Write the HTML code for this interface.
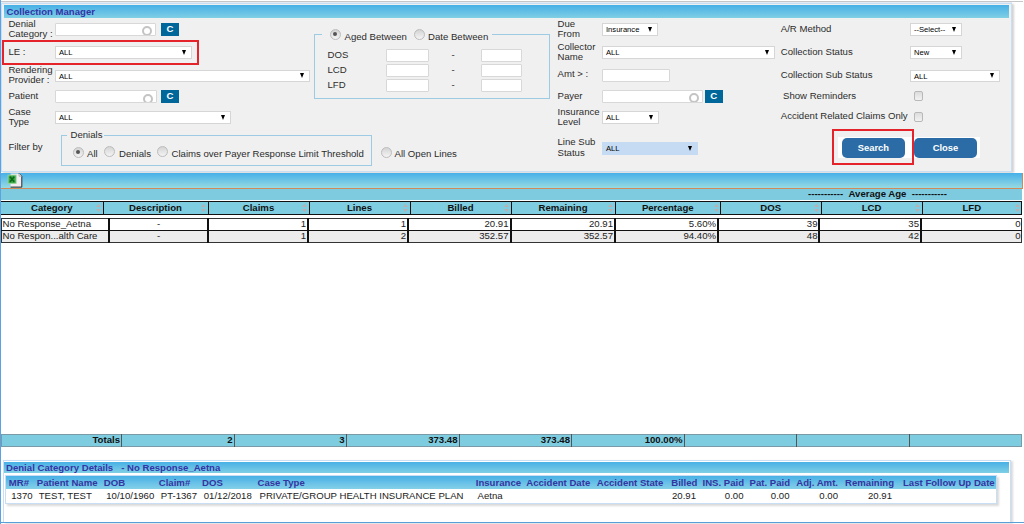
<!DOCTYPE html>
<html><head><meta charset="utf-8">
<style>
*{box-sizing:border-box;margin:0;padding:0}
html,body{width:1024px;height:524px;overflow:hidden;background:#fff}
body{position:relative;font-family:"Liberation Sans",sans-serif;font-size:9.6px;color:#333}
.a{position:absolute}
.t{position:absolute;white-space:nowrap;line-height:10.5px;font-size:9.6px;color:#2c2c2c}
.inp{position:absolute;background:#fff;border:1px solid #d8d8d8;border-radius:1px}
.sel{position:absolute;background:#fff;border:1px solid #d6d6d6;font-size:7.6px;color:#000;line-height:11px;padding-left:3px;white-space:nowrap}
.sel i{position:absolute;right:5px;top:2.8px;width:0;height:0;border-left:2.8px solid transparent;border-right:2.8px solid transparent;border-top:5.2px solid #000}
.cbtn{position:absolute;background:#00679b;color:#fff;font-weight:bold;font-size:9.6px;text-align:center;line-height:12.5px}
.srch{position:absolute;width:10px;height:10px;border:2px solid #c4c4c4;border-radius:50%}
.rad{position:absolute;width:11px;height:11px;border-radius:50%;border:1px solid #bcbcbc;background:linear-gradient(#d4d4d4,#f4f4f4)}
.rad.on::after{content:"";position:absolute;left:2.4px;top:2.4px;width:4px;height:4px;border-radius:50%;background:#555}
.chk{position:absolute;width:9.5px;height:9.5px;border:1px solid #b8b8b8;border-radius:2px;background:linear-gradient(#dcdcdc,#f2f2f2)}
.btn{position:absolute;background:#2b6ca6;border-radius:5px;color:#fff;font-weight:bold;font-size:9.4px;text-align:center;line-height:19.5px}
.hc{position:absolute;top:201px;height:14px;border:1px solid #111;border-left:none;background:#7ecde0;font-weight:bold;color:#111;text-align:center;line-height:12px}
.dc{position:absolute;height:13px;border-right:2px solid #111;text-align:right;color:#222;line-height:11.5px;padding-right:1px;white-space:nowrap;overflow:hidden}
.tc{position:absolute;top:433.5px;height:13px;border-right:1px solid #555;text-align:right;font-weight:bold;color:#111;line-height:12px;padding-right:1px}
.dh{position:absolute;top:478px;font-weight:bold;color:#3535a0;white-space:nowrap;line-height:10.5px}
.dv{position:absolute;top:490.5px;color:#222;white-space:nowrap;line-height:10.5px}
</style></head><body>
<!-- page frame lines -->
<div class="a" style="left:0;top:1px;width:1023px;height:1px;background:#c6c6c6"></div>

<!-- Collection manager panel -->
<div class="a" style="left:1px;top:2px;width:1011px;height:1px;background:#e6edf6"></div>
<div class="a" style="left:1px;top:3px;width:1011px;height:169px;background:#f0f0f0;border:1px solid #c8def4;box-shadow:2px 1px 2px rgba(0,0,0,.18)"></div>
<div class="a" style="left:4px;top:5px;width:1005px;height:12.5px;background:linear-gradient(#47b0e6,#80cfe4)"></div>
<div class="t" style="left:6.5px;top:6px;font-weight:bold;color:#3434a6;line-height:12px">Collection Manager</div>

<!-- left column -->
<div class="t" style="left:8.4px;top:18.5px">Denial<br>Category :</div>
<div class="inp" style="left:55px;top:23px;width:101px;height:12.5px;overflow:hidden"><div class="srch" style="left:86px;top:2px"></div></div>
<div class="cbtn" style="left:161px;top:23px;width:18px;height:12.5px">C</div>

<div class="a" style="left:2px;top:40px;width:197px;height:24.5px;border:2px solid #e5232b"></div>
<div class="t" style="left:8.4px;top:47px">LE :</div>
<div class="sel" style="left:55px;top:46px;width:136.5px;height:13px">ALL<i></i></div>

<div class="t" style="left:8.4px;top:64.5px">Rendering<br>Provider :</div>
<div class="sel" style="left:55px;top:69.5px;width:254.5px;height:12.5px">ALL<i></i></div>

<div class="t" style="left:8.4px;top:91px">Patient</div>
<div class="inp" style="left:55px;top:90px;width:101.5px;height:12.5px;overflow:hidden"><div class="srch" style="left:87px;top:2.5px"></div></div>
<div class="cbtn" style="left:161px;top:90px;width:18px;height:13px">C</div>

<div class="t" style="left:8.4px;top:106.5px">Case<br>Type</div>
<div class="sel" style="left:55px;top:111px;width:175.5px;height:12.5px">ALL<i></i></div>

<div class="t" style="left:8.4px;top:142px">Filter by</div>
<!-- denials fieldset -->
<div class="a" style="left:61px;top:135px;width:310.5px;height:31px;border:1px solid #9ccbe3"></div>
<div class="a" style="left:67px;top:130px;width:37px;height:8px;background:#f0f0f0"></div>
<div class="t" style="left:70.5px;top:129.5px">Denials</div>
<div class="rad on" style="left:72.5px;top:146.5px"></div>
<div class="t" style="left:87px;top:149.3px">All</div>
<div class="rad" style="left:104px;top:146px"></div>
<div class="t" style="left:119px;top:149.3px">Denials</div>
<div class="rad" style="left:157px;top:146px"></div>
<div class="t" style="left:171.5px;top:149.3px">Claims over Payer Response Limit Threshold</div>
<div class="rad" style="left:380.5px;top:146.5px"></div>
<div class="t" style="left:394.5px;top:149.3px">All Open Lines</div>

<!-- aged fieldset -->
<div class="a" style="left:314px;top:34px;width:235.5px;height:64.5px;border:1px solid #9ccbe3"></div>
<div class="a" style="left:322px;top:28px;width:170px;height:10px;background:#f0f0f0"></div>
<div class="rad on" style="left:329.5px;top:29px;width:11px;height:11px"></div>
<div class="t" style="left:344.5px;top:32px">Aged Between</div>
<div class="rad" style="left:413.5px;top:28.5px;width:11px;height:11px"></div>
<div class="t" style="left:428px;top:32px">Date Between</div>
<div class="t" style="left:327.5px;top:49.5px">DOS</div>
<div class="t" style="left:327.5px;top:64.5px">LCD</div>
<div class="t" style="left:327.5px;top:79.5px">LFD</div>
<div class="inp" style="left:386px;top:49px;width:42.75px;height:12.5px"></div>
<div class="inp" style="left:386px;top:64px;width:42.75px;height:12.5px"></div>
<div class="inp" style="left:386px;top:79px;width:42.75px;height:12.5px"></div>
<div class="t" style="left:451.5px;top:50px">-</div>
<div class="t" style="left:451.5px;top:65px">-</div>
<div class="t" style="left:451.5px;top:80px">-</div>
<div class="inp" style="left:480.5px;top:49px;width:41.5px;height:12.5px"></div>
<div class="inp" style="left:480.5px;top:64px;width:41.5px;height:12.5px"></div>
<div class="inp" style="left:480.5px;top:79px;width:41.5px;height:12.5px"></div>

<!-- middle right column -->
<div class="t" style="left:557.5px;top:18.5px">Due<br>From</div>
<div class="sel" style="left:602px;top:23px;width:55.5px;height:12.5px">Insurance<i></i></div>
<div class="t" style="left:557.5px;top:41.5px">Collector<br>Name</div>
<div class="sel" style="left:602px;top:46px;width:172.5px;height:13px">ALL<i></i></div>
<div class="t" style="left:557.5px;top:69px">Amt &gt; :</div>
<div class="inp" style="left:602px;top:69px;width:67.5px;height:12.5px"></div>
<div class="t" style="left:557.5px;top:90.5px">Payer</div>
<div class="inp" style="left:602px;top:90px;width:100.5px;height:12.5px;overflow:hidden"><div class="srch" style="left:85.5px;top:2px"></div></div>
<div class="cbtn" style="left:705px;top:90px;width:17.5px;height:13px">C</div>
<div class="t" style="left:557.5px;top:106.5px">Insurance<br>Level</div>
<div class="sel" style="left:602px;top:111px;width:56.75px;height:12.5px">ALL<i></i></div>
<div class="t" style="left:557.5px;top:137px">Line Sub<br>Status</div>
<div class="sel" style="left:602px;top:142px;width:95.5px;height:12.5px;background:#c5daf3;border-color:#c5daf3">ALL<i></i></div>

<!-- right column -->
<div class="t" style="left:780.75px;top:23.5px">A/R Method</div>
<div class="sel" style="left:910px;top:23px;width:52px;height:12.5px">--Select--<i></i></div>
<div class="t" style="left:780.75px;top:46.5px">Collection Status</div>
<div class="sel" style="left:910px;top:46px;width:52px;height:13px">New<i></i></div>
<div class="t" style="left:780.75px;top:69.5px">Collection Sub Status</div>
<div class="sel" style="left:910px;top:69.5px;width:89.5px;height:12.5px">ALL<i></i></div>
<div class="t" style="left:783px;top:90.5px">Show Reminders</div>
<div class="chk" style="left:913.5px;top:91px"></div>
<div class="t" style="left:780.75px;top:111px">Accident Related Claims Only</div>
<div class="chk" style="left:913.5px;top:112px"></div>

<!-- buttons -->
<div class="a" style="left:838px;top:137px;width:142px;height:21px;background:#fff"></div>
<div class="btn" style="left:841.75px;top:138px;width:63.25px;height:19.5px">Search</div>
<div class="btn" style="left:914.25px;top:138px;width:62.5px;height:19.5px">Close</div>
<div class="a" style="left:832px;top:129px;width:81.5px;height:35.5px;border:2px solid #e5232b"></div>

<!-- excel bar -->
<div class="a" style="left:1px;top:173px;width:1022px;height:16px;background:linear-gradient(#46b0e8,#96dae2);border-right:1px solid #d08a5a;border-bottom:1px solid #d08a5a"></div>
<svg class="a" style="left:7px;top:171.5px" width="16" height="16" viewBox="0 0 16 16">
<path d="M3.6 1.4h8.4l2.8 2.8v10.9h-11.2z" fill="#f3ecf3"/>
<path d="M12 1.4l2.8 2.8v10.9h-11.2" fill="none" stroke="#2a2a2a" stroke-width="1"/>
<path d="M12 1.4v2.8h2.8" fill="#ddd" stroke="#888" stroke-width="0.5"/>
<rect x="1.1" y="3.1" width="8" height="8.4" fill="#3fa84a" stroke="#9ad49c" stroke-width="0.9"/>
<path d="M3 4.8l4.2 5M7.2 4.8l-4.2 5" stroke="#0a6a18" stroke-width="1.7"/>
</svg>
<div class="a" style="left:1px;top:189px;width:1021px;height:11.5px;background:#7ecbe0"></div>
<div class="t" style="left:808px;top:188.5px;font-weight:bold;color:#111">----------- &nbsp;Average Age &nbsp;-----------</div>

<!-- header table -->
<div class="a" style="left:1px;top:200px;width:1021px;height:1px;background:#fff"></div>
<div class="a" style="left:1px;top:201px;width:1px;height:14px;background:#111"></div>
<div class="hc" style="left:1px;width:102.5px">Category<svg style="position:absolute;right:1.5px;top:2px" width="5" height="9" viewBox="0 0 5 9"><path d="M2.5 0L5 3H0z M0 5h5L2.5 8z" fill="#bab0b0"/></svg></div>
<div class="hc" style="left:103.5px;width:105px">Description<svg style="position:absolute;right:1.5px;top:2px" width="5" height="9" viewBox="0 0 5 9"><path d="M2.5 0L5 3H0z M0 5h5L2.5 8z" fill="#bab0b0"/></svg></div>
<div class="hc" style="left:208.5px;width:101px">Claims<svg style="position:absolute;right:1.5px;top:2px" width="5" height="9" viewBox="0 0 5 9"><path d="M2.5 0L5 3H0z M0 5h5L2.5 8z" fill="#bab0b0"/></svg></div>
<div class="hc" style="left:309.5px;width:101px">Lines<svg style="position:absolute;right:1.5px;top:2px" width="5" height="9" viewBox="0 0 5 9"><path d="M2.5 0L5 3H0z M0 5h5L2.5 8z" fill="#bab0b0"/></svg></div>
<div class="hc" style="left:410.5px;width:101px">Billed<svg style="position:absolute;right:1.5px;top:2px" width="5" height="9" viewBox="0 0 5 9"><path d="M2.5 0L5 3H0z M0 5h5L2.5 8z" fill="#bab0b0"/></svg></div>
<div class="hc" style="left:511.5px;width:104px">Remaining<svg style="position:absolute;right:1.5px;top:2px" width="5" height="9" viewBox="0 0 5 9"><path d="M2.5 0L5 3H0z M0 5h5L2.5 8z" fill="#bab0b0"/></svg></div>
<div class="hc" style="left:615.5px;width:105.5px">Percentage<svg style="position:absolute;right:1.5px;top:2px" width="5" height="9" viewBox="0 0 5 9"><path d="M2.5 0L5 3H0z M0 5h5L2.5 8z" fill="#bab0b0"/></svg></div>
<div class="hc" style="left:721px;width:100.5px">DOS<svg style="position:absolute;right:1.5px;top:2px" width="5" height="9" viewBox="0 0 5 9"><path d="M2.5 0L5 3H0z M0 5h5L2.5 8z" fill="#bab0b0"/></svg></div>
<div class="hc" style="left:821.5px;width:101px">LCD<svg style="position:absolute;right:1.5px;top:2px" width="5" height="9" viewBox="0 0 5 9"><path d="M2.5 0L5 3H0z M0 5h5L2.5 8z" fill="#bab0b0"/></svg></div>
<div class="hc" style="left:922.5px;width:99.5px">LFD<svg style="position:absolute;right:1.5px;top:2px" width="5" height="9" viewBox="0 0 5 9"><path d="M2.5 0L5 3H0z M0 5h5L2.5 8z" fill="#bab0b0"/></svg></div>

<!-- data table -->
<div class="a" style="left:1px;top:218px;width:1021px;height:25px;border:1px solid #333;background:#fff"></div>
<div class="a" style="left:2px;top:231px;width:1019px;height:11px;background:#ececec"></div>
<div class="a" style="left:1px;top:230px;width:1021px;height:1px;background:#111"></div>
<div class="a" style="left:108px;top:218px;width:2px;height:25px;background:#111"></div>
<div class="a" style="left:207px;top:218px;width:2px;height:25px;background:#111"></div>
<div class="a" style="left:307px;top:218px;width:2px;height:25px;background:#111"></div>
<div class="a" style="left:407px;top:218px;width:2px;height:25px;background:#111"></div>
<div class="a" style="left:509.5px;top:218px;width:2px;height:25px;background:#111"></div>
<div class="a" style="left:613.5px;top:218px;width:2px;height:25px;background:#111"></div>
<div class="a" style="left:716.5px;top:218px;width:2px;height:25px;background:#111"></div>
<div class="a" style="left:818px;top:218px;width:2px;height:25px;background:#111"></div>
<div class="a" style="left:919.5px;top:218px;width:2px;height:25px;background:#111"></div>

<div class="t" style="left:2.5px;top:218.5px;color:#222">No Response_Aetna</div>
<div class="t" style="left:2.5px;top:231px;color:#222">No Respon...alth Care</div>
<div class="t" style="left:157px;top:218.5px;color:#222">-</div>
<div class="t" style="left:157px;top:231px;color:#222">-</div>
<div class="t" style="left:207px;top:218.5px;width:99px;text-align:right;color:#222">1</div>
<div class="t" style="left:207px;top:231px;width:99px;text-align:right;color:#222">1</div>
<div class="t" style="left:307px;top:218.5px;width:99px;text-align:right;color:#222">1</div>
<div class="t" style="left:307px;top:231px;width:99px;text-align:right;color:#222">2</div>
<div class="t" style="left:407px;top:218.5px;width:101.5px;text-align:right;color:#222">20.91</div>
<div class="t" style="left:407px;top:231px;width:101.5px;text-align:right;color:#222">352.57</div>
<div class="t" style="left:509px;top:218.5px;width:104px;text-align:right;color:#222">20.91</div>
<div class="t" style="left:509px;top:231px;width:104px;text-align:right;color:#222">352.57</div>
<div class="t" style="left:613px;top:218.5px;width:103px;text-align:right;color:#222">5.60%</div>
<div class="t" style="left:613px;top:231px;width:103px;text-align:right;color:#222">94.40%</div>
<div class="t" style="left:716px;top:218.5px;width:101.5px;text-align:right;color:#222">39</div>
<div class="t" style="left:716px;top:231px;width:101.5px;text-align:right;color:#222">48</div>
<div class="t" style="left:818px;top:218.5px;width:101px;text-align:right;color:#222">35</div>
<div class="t" style="left:818px;top:231px;width:101px;text-align:right;color:#222">42</div>
<div class="t" style="left:919px;top:218.5px;width:101.5px;text-align:right;color:#222">0</div>
<div class="t" style="left:919px;top:231px;width:101.5px;text-align:right;color:#222">0</div>

<!-- totals -->
<div class="a" style="left:1px;top:433.5px;width:1021px;height:13px;background:#7ecce0;border:1px solid #7a9aa8"></div>
<div class="tc" style="left:1px;width:121px">Totals</div>
<div class="tc" style="left:122px;width:112.5px">2</div>
<div class="tc" style="left:234.5px;width:112px">3</div>
<div class="tc" style="left:346.5px;width:113px">373.48</div>
<div class="tc" style="left:459.5px;width:112.5px">373.48</div>
<div class="tc" style="left:572px;width:112.5px">100.00%</div>
<div class="tc" style="left:684.5px;width:112.5px"></div>
<div class="tc" style="left:797px;width:112.5px"></div>

<!-- details panel -->
<div class="a" style="left:3px;top:459.5px;width:1008px;height:63px;border:1px solid #c8def4;background:#fff;box-shadow:2px 1px 2px rgba(0,0,0,.15)"></div>
<div class="a" style="left:4px;top:462px;width:1005px;height:11px;background:linear-gradient(#47b0e6,#80cfe4)"></div>
<div class="t" style="left:6px;top:462.5px;font-weight:bold;color:#3434a6">Denial Category Details &nbsp;&nbsp;- No Response_Aetna</div>
<div class="a" style="left:4.5px;top:474.5px;width:992.5px;height:29.5px;border:1px solid #c8def4;background:#fff;box-shadow:2px 2px 2px rgba(0,0,0,.15)"></div>
<div class="a" style="left:5.5px;top:476px;width:990.5px;height:13px;background:linear-gradient(#48b0e6,#84d0e8)"></div>
<div class="dh" style="left:8.75px">MR#</div>
<div class="dh" style="left:36.75px">Patient Name</div>
<div class="dh" style="left:103.75px">DOB</div>
<div class="dh" style="left:158.75px">Claim#</div>
<div class="dh" style="left:202px">DOS</div>
<div class="dh" style="left:257.5px">Case Type</div>
<div class="dh" style="left:475.75px">Insurance</div>
<div class="dh" style="left:526.25px">Accident Date</div>
<div class="dh" style="left:596.75px">Accident State</div>
<div class="dh" style="left:671.25px">Billed</div>
<div class="dh" style="left:702.5px">INS. Paid</div>
<div class="dh" style="left:749.5px">Pat. Paid</div>
<div class="dh" style="left:796.25px">Adj. Amt.</div>
<div class="dh" style="left:845px">Remaining</div>
<div class="dh" style="left:903px">Last Follow Up Date</div>

<div class="dv" style="left:11.25px">1370</div>
<div class="dv" style="left:38.75px">TEST, TEST</div>
<div class="dv" style="left:106.25px">10/10/1960</div>
<div class="dv" style="left:160.75px">PT-1367</div>
<div class="dv" style="left:203.75px">01/12/2018</div>
<div class="dv" style="left:259.5px">PRIVATE/GROUP HEALTH INSURANCE PLAN</div>
<div class="dv" style="left:477.5px">Aetna</div>
<div class="dv" style="left:646px;width:50px;text-align:right">20.91</div>
<div class="dv" style="left:693.5px;width:50px;text-align:right">0.00</div>
<div class="dv" style="left:739.5px;width:50px;text-align:right">0.00</div>
<div class="dv" style="left:788px;width:50px;text-align:right">0.00</div>
<div class="dv" style="left:842px;width:50px;text-align:right">20.91</div>

<div class="a" style="left:0;top:522px;width:1024px;height:1px;background:#5a9ed8"></div>
<div class="a" style="left:0;top:0;width:1px;height:524px;background:#5aa2e2"></div>
</body></html>
